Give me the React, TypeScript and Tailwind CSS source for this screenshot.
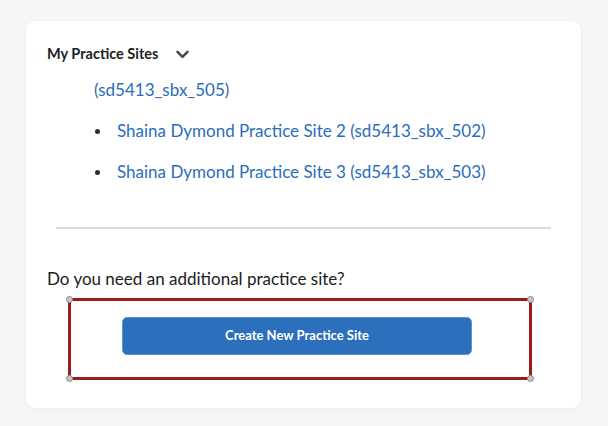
import React from "react";

const font = { fontFamily: "Lato, 'Noto Sans', sans-serif" };

function Bullet() {
  return <span className="block w-[5px] h-[5px] rounded-full bg-[#2f2f33] shrink-0" />;
}

export default function App() {
  return (
    <div className="w-[608px] h-[426px] bg-[#f5f6f8] pt-[21px] pl-[26px] overflow-hidden" style={font}>
      <div className="w-[555px] h-[387px] bg-white rounded-[9px] shadow-[0_1px_4px_rgba(0,0,0,0.04)] px-[21px] pt-[23px]">
        <div className="flex items-center h-[20px]">
          <span className="text-[14.5px] font-bold text-[#202122] leading-[20px]">My Practice Sites</span>
          <svg className="ml-[18px]" width="13" height="9" viewBox="0 0 13 9">
            <path d="M1.5 1.8 L6.5 6.8 L11.5 1.8" fill="none" stroke="#494c4e" strokeWidth="2.6" strokeLinecap="round" strokeLinejoin="round" />
          </svg>
        </div>
        <div className="mt-[14px] flex flex-col gap-[17px] text-[17px] leading-[24px] text-[#2a6dba]">
          <div className="ml-[47px]">(sd5413_sbx_505)</div>
          <div className="flex items-center ml-[48px]">
            <Bullet />
            <span className="ml-[17px]">Shaina Dymond Practice Site 2 (sd5413_sbx_502)</span>
          </div>
          <div className="flex items-center ml-[48px]">
            <Bullet />
            <span className="ml-[17px]">Shaina Dymond Practice Site 3 (sd5413_sbx_503)</span>
          </div>
        </div>
        <div className="mt-[43px] mx-[9px] h-[2px] bg-[#dcdcdc]" />
        <div className="mt-[38px] text-[17px] leading-[24px] text-[#202122]">Do you need an additional practice site?</div>
        <div className="relative mt-[7px] ml-[21px] w-[464px] h-[82px] border-[3px] border-[#9b1e1a] pt-[16px] pl-[51px]">
          <button className="w-[350px] h-[38px] rounded-[5px] bg-[#2c6fbc] border border-[#5f93d0] text-white text-[13px] font-bold" style={font}>
            Create New Practice Site
          </button>
          <span className="absolute -left-[5px] -top-[5px] w-[7px] h-[7px] rounded-full bg-[#c8c8c8] border border-[#8a8a8a]" />
          <span className="absolute -right-[5px] -top-[5px] w-[7px] h-[7px] rounded-full bg-[#c8c8c8] border border-[#8a8a8a]" />
          <span className="absolute -left-[5px] -bottom-[5px] w-[7px] h-[7px] rounded-full bg-[#c8c8c8] border border-[#8a8a8a]" />
          <span className="absolute -right-[5px] -bottom-[5px] w-[7px] h-[7px] rounded-full bg-[#c8c8c8] border border-[#8a8a8a]" />
        </div>
      </div>
    </div>
  );
}
